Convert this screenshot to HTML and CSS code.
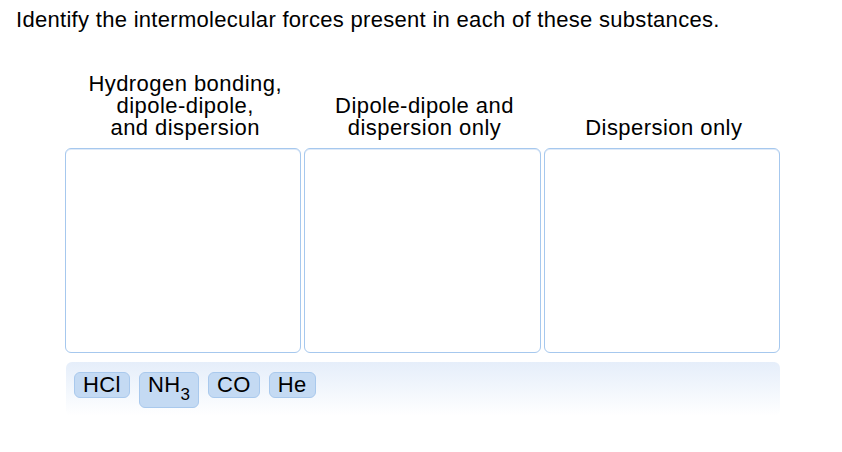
FILE: index.html
```html
<!DOCTYPE html>
<html>
<head>
  <meta charset="UTF-8">
  <title>Intermolecular forces</title>
  <link rel="stylesheet" href="styles.css">
</head>
<body>
  <h1 class="prompt">Identify the intermolecular forces present in each of these substances.</h1>

  <div class="sorter">
    <div class="bin-labels">
      <div class="bin-label">Hydrogen bonding,<br>dipole-dipole,<br>and dispersion</div>
      <div class="bin-label">Dipole-dipole and<br>dispersion only</div>
      <div class="bin-label">Dispersion only</div>
    </div>

    <div class="bins">
      <div class="bin"></div>
      <div class="bin"></div>
      <div class="bin"></div>
    </div>

    <div class="tray">
      <div class="chip">HCl</div>
      <div class="chip">NH<sub>3</sub></div>
      <div class="chip">CO</div>
      <div class="chip">He</div>
    </div>
  </div>
</body>
</html>
```

FILE: styles.css
```css
body {
  font-family: 'Liberation Sans', Arial, Helvetica, sans-serif;
  color: #000000;
  background-color: #ffffff;
  margin: 0;
  padding: 8px 16px;
}
.prompt {
  font-size: 22px;
  font-weight: normal;
  letter-spacing: 0.3px;
  line-height: 23px;
  margin: 0;
}
.sorter {
  width: 715px;
  margin-left: 49px;
  margin-top: 42px;
}
.bin-labels {
  display: grid;
  grid-template-columns: repeat(3, 1fr);
  gap: 3px;
  align-items: end;
  margin-bottom: 9px;
}
.bin-label {
  font-size: 22px;
  letter-spacing: 0.45px;
  line-height: 22px;
  text-align: center;
  padding-left: 4px;
}
.bins {
  display: grid;
  grid-template-columns: repeat(3, 1fr);
  gap: 3px;
}
.bin {
  height: 203px;
  border: 1px solid #a6c8ee;
  border-radius: 6px;
  box-shadow: inset 0 1px 0 #dfeaf8;
  background-color: #ffffff;
}
.tray {
  display: flex;
  align-items: flex-start;
  gap: 9px;
  margin-top: 9px;
  margin-left: 1px;
  padding: 10px 8px 8px;
  min-height: 25px;
  border-radius: 6px;
  background: linear-gradient(to bottom, #e5eefa, #ffffff);
}
.chip {
  font-size: 22px;
  letter-spacing: 0.4px;
  line-height: 24px;
  padding: 0 8px;
  border: 1px solid #a9c9ed;
  border-radius: 6px;
  background-color: #c4daf3;
}
.chip sub {
  font-size: 17px;
  letter-spacing: 0;
  vertical-align: -0.45em;
}
```
